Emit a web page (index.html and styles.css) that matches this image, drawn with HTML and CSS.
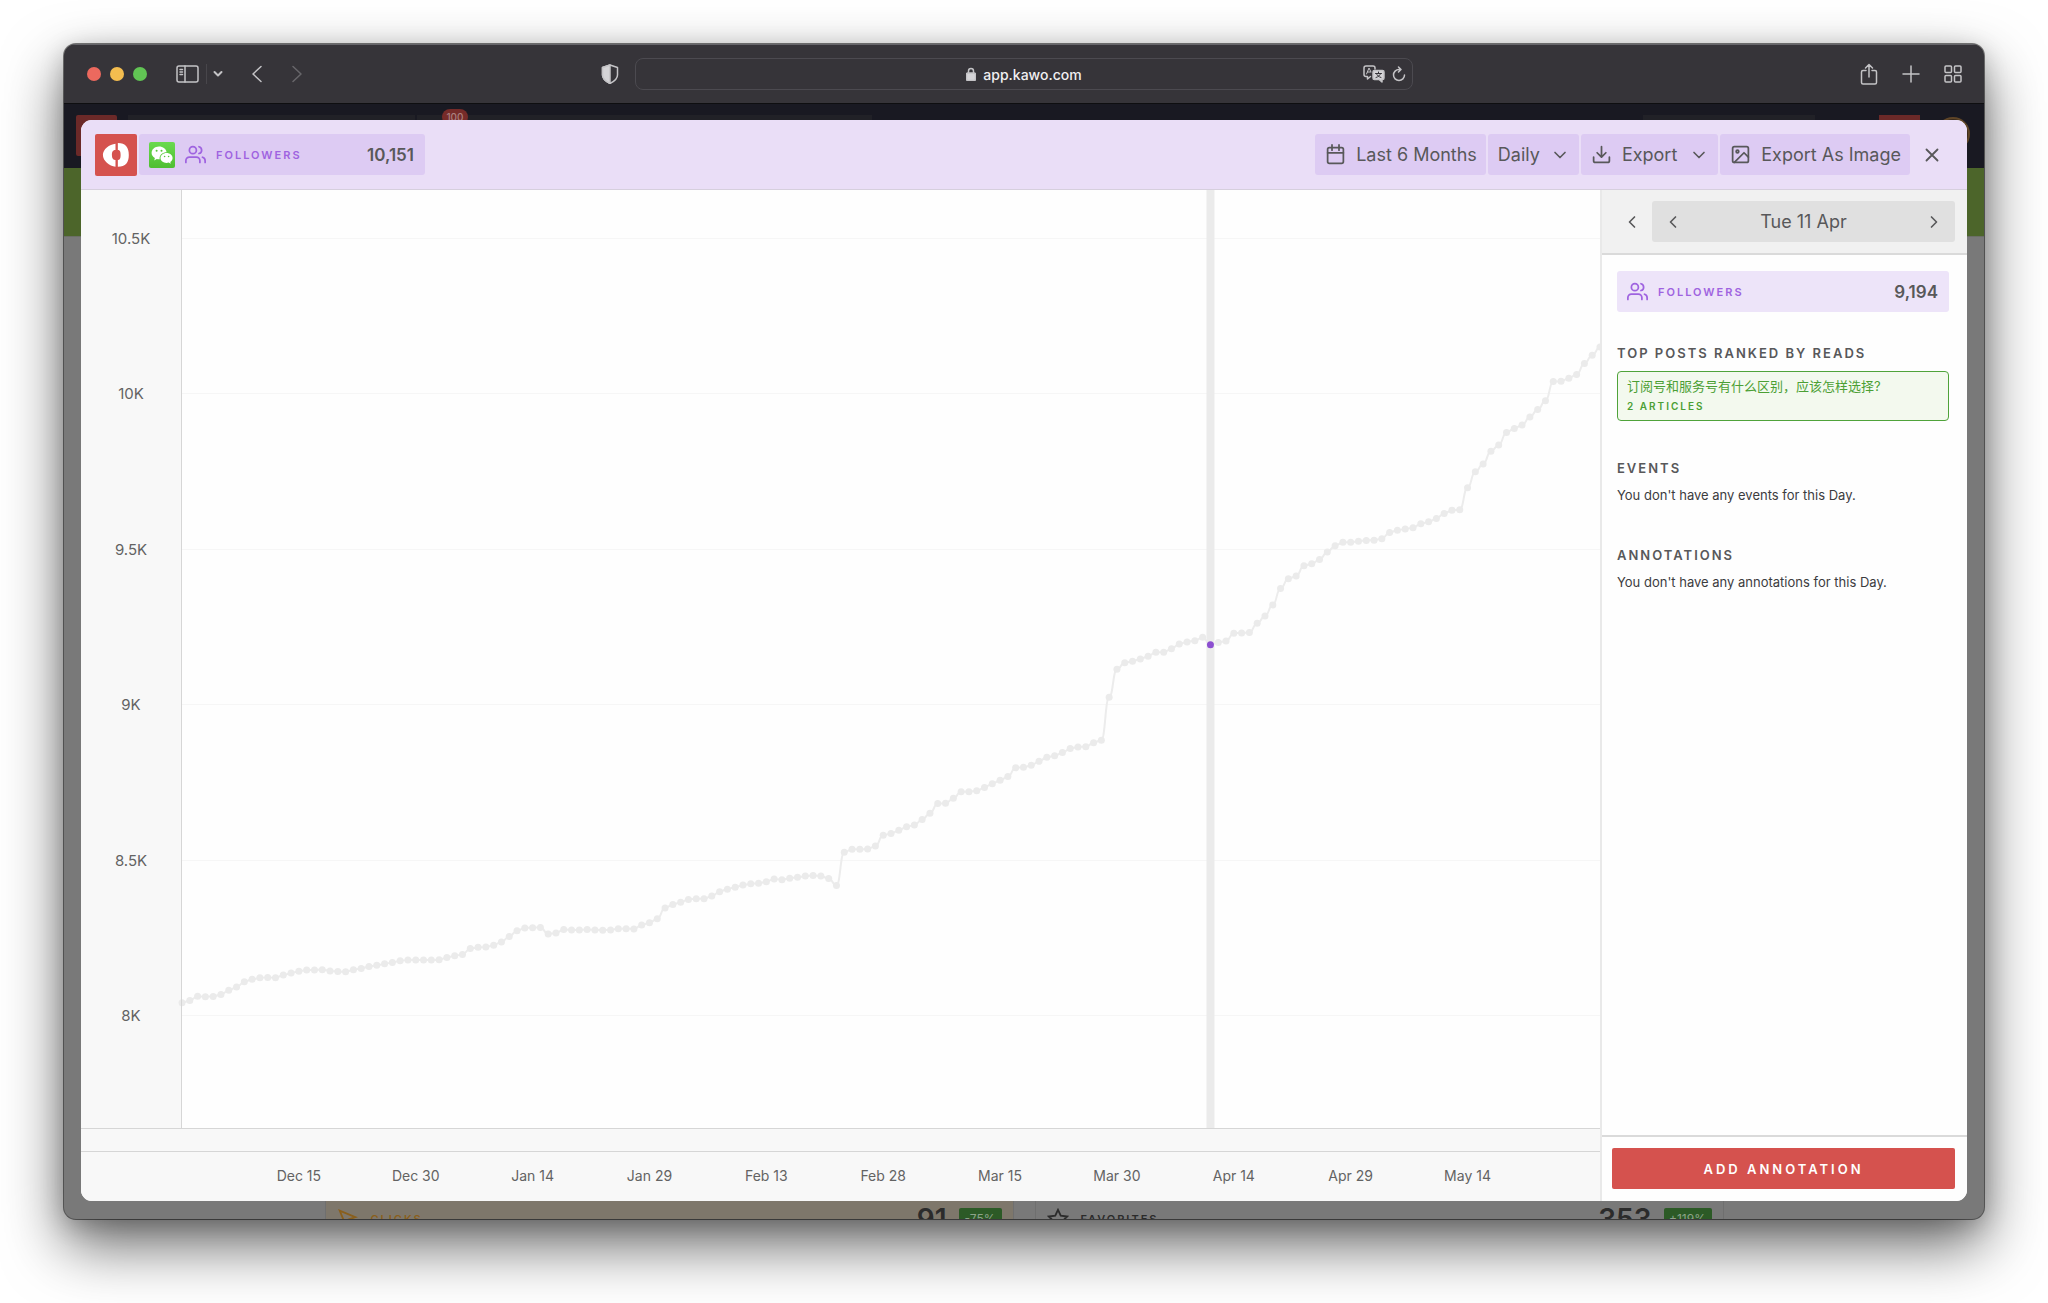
FILE: index.html
```
<!DOCTYPE html>
<html lang="en">
<head>
    <meta charset="UTF-8">
    <meta name="viewport" content="width=device-width, initial-scale=1.0">
    <title>KAWO - Followers</title>
    <link rel="stylesheet" href="styles.css">
</head>
<body>

<div class="window">
    <!-- Browser toolbar -->
    <header class="toolbar">
        <div class="toolbar-left">
            <div class="lights">
                <span class="light red"></span>
                <span class="light yellow"></span>
                <span class="light green"></span>
            </div>
            <button class="tool sidebar-btn" aria-label="Sidebar">
                <svg width="24" height="20" viewBox="0 0 24 20"><rect x="1" y="2" width="21" height="16" rx="2"/><path d="M9 2v16M4 5.500h2.500M4 8h2.500M4 10.500h2.500"/></svg>
            </button>
            <span class="tool-divider"></span>
            <button class="tool" aria-label="Tab groups">
                <svg width="10" height="8" viewBox="0 0 10 8"><path d="M1.500 2 5 5.500 8.500 2" stroke-width="2"/></svg>
            </button>
            <button class="tool back-btn" aria-label="Back">
                <svg width="12" height="18" viewBox="0 0 12 18"><path d="M10 1.500 2 9l8 7.500"/></svg>
            </button>
            <button class="tool forward-btn" aria-label="Forward" disabled>
                <svg width="12" height="18" viewBox="0 0 12 18"><path d="m2 1.500 8 7.500-8 7.500"/></svg>
            </button>
        </div>

        <div class="toolbar-center">
            <button class="tool" aria-label="Privacy report">
                <svg width="18" height="20" viewBox="0 0 18 20"><path d="M9 1 1.500 3.500V11c0 4 3.500 6.500 7.500 8.500 4-2 7.500-4.500 7.500-8.500V3.500z"/><path class="fill" d="M9 1 1.500 3.500V11c0 4 3.500 6.500 7.500 8.500z"/></svg>
            </button>
            <div class="address">
                <span class="address-url">
                    <svg width="10" height="14" viewBox="0 0 10 14"><rect class="fill" x="0.500" y="6" width="9" height="7.500" rx="1.500"/><path d="M2.500 6V4a2.500 2.500 0 0 1 5 0v2"/></svg>
                    app.kawo.com
                </span>
                <button class="tool" aria-label="Translate">
                    <svg width="22" height="18" viewBox="0 0 22 18"><path d="M7.500 11.500 4.500 14v-2.500H3a2 2 0 0 1-2-2V3a2 2 0 0 1 2-2h7a2 2 0 0 1 2 2v1"/><path class="thin" d="m3.500 9 2.500-6 2 4M4.500 7h3"/><path class="fill" d="M11.500 5.500h8a1.500 1.500 0 0 1 1.500 1.500v6a1.500 1.500 0 0 1-1.500 1.500H19V17l-3-2.500h-4.500A1.500 1.500 0 0 1 10 13V7a1.500 1.500 0 0 1 1.500-1.500z"/><path class="cut" d="M12.500 8.500h6M15.500 7v1.500M17.500 8.500c-.5 2-2 3.200-4.500 4M13.500 8.500c.5 2 2 3.200 4.500 4"/></svg>
                </button>
                <button class="tool" aria-label="Reload">
                    <svg width="14" height="16" viewBox="0 0 14 16"><path d="M12.500 9A5.500 5.500 0 1 1 7 3.500h1.500M6.500 1l2.500 2.500L6.500 6"/></svg>
                </button>
            </div>
        </div>

        <div class="toolbar-right">
            <button class="tool" aria-label="Share">
                <svg width="18" height="22" viewBox="0 0 18 22"><path d="M6 7.500H3A1.500 1.500 0 0 0 1.500 9v10.500A1.500 1.500 0 0 0 3 21h12a1.500 1.500 0 0 0 1.500-1.500V9A1.500 1.500 0 0 0 15 7.500h-3M9 14V1.500M5.500 5 9 1.500 12.500 5"/></svg>
            </button>
            <button class="tool" aria-label="New tab">
                <svg width="18" height="18" viewBox="0 0 18 18"><path d="M9 1v16M1 9h16"/></svg>
            </button>
            <button class="tool" aria-label="Tab overview">
                <svg width="18" height="18" viewBox="0 0 18 18"><rect x="1" y="1" width="6.500" height="6.500" rx="1"/><rect x="10.500" y="1" width="6.500" height="6.500" rx="1"/><rect x="1" y="10.500" width="6.500" height="6.500" rx="1"/><rect x="10.500" y="10.500" width="6.500" height="6.500" rx="1"/></svg>
            </button>
        </div>
    </header>

    <div class="viewport">
        <!-- Dimmed dashboard behind the dialog -->
        <div class="page">
            <div class="page-nav">
                <span class="page-logo"></span>
                <span class="page-tab short"></span>
                <span class="page-tab"><b class="page-badge">100</b></span>
                <span class="page-space"></span>
                <span class="page-search"></span>
                <span class="page-create"></span>
                <span class="page-avatar"></span>
            </div>
            <div class="page-banner"></div>
            <div class="page-cards">
                <div class="page-card clicks">
                    <svg width="22" height="22" viewBox="0 0 24 24"><path d="M3 3l7 17 2.500-7.500L20 10z"/></svg>
                    <span class="card-name">CLICKS</span>
                    <span class="card-value">91</span>
                    <span class="card-change">-75%</span>
                </div>
                <div class="page-card">
                    <svg width="22" height="22" viewBox="0 0 24 24"><path d="m12 2 3 6.300 7 1-5 4.900 1.200 6.800L12 17.800 5.800 21 7 14.200 2 9.300l7-1z"/></svg>
                    <span class="card-name">FAVORITES</span>
                    <span class="card-value">353</span>
                    <span class="card-change">+119%</span>
                </div>
            </div>
        </div>

        <!-- Followers dialog -->
        <main class="dialog">
            <header class="dialog-header">
                <svg class="logo" width="42" height="42" viewBox="0 0 41 41"><rect width="41" height="41" rx="2" fill="#d5524e"/><path fill="#fff" d="M20 9.500C14 10 7.700 15 7.700 20.500S14 31.500 20 32v-6.500c-2.300-.2-3.500-1.500-3.500-5s1.200-4.600 3.500-4.800zM22.300 8.700C30 8.700 33 13 33 20.500S30 32 22.300 32v-6.500c2-.2 2.700-1.500 2.700-5s-.7-4.600-2.700-4.800z"/></svg>
                <div class="metric header-metric">
                    <svg class="wechat" width="26" height="26" viewBox="0 0 26 26">
                        <defs><linearGradient id="wechatGreen" x1="0" y1="0" x2="0" y2="1"><stop offset="0" stop-color="#6ada4e"/><stop offset="1" stop-color="#4fbe32"/></linearGradient></defs>
                        <rect width="26" height="26" rx="2" fill="url(#wechatGreen)"/>
                        <path fill="#fff" d="M10 4.500c4 0 7.300 2.500 7.600 5.700-4 0-7 2.600-7 6 0 .4 0 .8.200 1.100-1 .1-2 0-3-.3l-2.600 1.400.7-2.300C3.800 14.900 2.600 13 2.600 11c0-3.600 3.300-6.500 7.400-6.500z"/>
                        <path fill="#fff" d="M17.600 11c3.400 0 6 2.300 6 5 0 1.600-.9 3-2.300 4l.5 1.800-2.100-1.200c-.7.200-1.400.3-2.100.3-3.400 0-6.100-2.200-6.100-4.900s2.700-5 6.100-5z"/>
                        <g fill="#57c63b"><circle cx="7.600" cy="8.800" r="1"/><circle cx="12.500" cy="8.800" r="1"/><circle cx="15.600" cy="14.500" r="0.800"/><circle cx="19.600" cy="14.500" r="0.800"/></g>
                    </svg>
                    <svg class="icon" width="21" height="21" viewBox="0 0 24 24"><path d="M17 21v-2a4 4 0 0 0-4-4H5a4 4 0 0 0-4 4v2M23 21v-2a4 4 0 0 0-3-3.870M16 3.130a4 4 0 0 1 0 7.750"/><circle cx="9" cy="7" r="4"/></svg>
                    <span class="metric-name">FOLLOWERS</span>
                    <span class="metric-value">10,151</span>
                </div>
                <div class="actions">
                    <button class="action">
                        <svg class="icon" width="21" height="21" viewBox="0 0 24 24"><rect x="3" y="4" width="18" height="18" rx="2"/><path d="M16 1v6M8 1v6M3 10h18"/></svg>
                        Last 6 Months
                    </button>
                    <button class="action">
                        Daily
                        <svg class="icon" width="20" height="20" viewBox="0 0 24 24"><path d="m6 9 6 6 6-6"/></svg>
                    </button>
                    <button class="action">
                        <svg class="icon" width="21" height="21" viewBox="0 0 24 24"><path d="M21 15v4a2 2 0 0 1-2 2H5a2 2 0 0 1-2-2v-4M7 10l5 5 5-5M12 15V3"/></svg>
                        Export
                        <svg class="icon export-arrow" width="20" height="20" viewBox="0 0 24 24"><path d="m6 9 6 6 6-6"/></svg>
                    </button>
                    <button class="action">
                        <svg class="icon" width="21" height="21" viewBox="0 0 24 24"><rect x="3" y="3" width="18" height="18" rx="2"/><circle cx="8.500" cy="8.500" r="1.500"/><path d="m21 15-5-5L5 21"/></svg>
                        Export As Image
                    </button>
                    <button class="close" aria-label="Close">
                        <svg class="icon" width="22" height="22" viewBox="0 0 24 24"><path d="M18 6 6 18M6 6l12 12"/></svg>
                    </button>
                </div>
            </header>

            <div class="dialog-body">
                <section class="chart">
                    <svg id="chart"></svg>
                </section>

                <aside class="panel">
                    <div class="panel-header">
                        <button class="nav-btn" aria-label="Collapse">
                            <svg class="icon" width="20" height="20" viewBox="0 0 24 24"><path d="m15 18-6-6 6-6"/></svg>
                        </button>
                        <div class="date-picker">
                            <button class="nav-btn" aria-label="Previous day">
                                <svg class="icon" width="20" height="20" viewBox="0 0 24 24"><path d="m15 18-6-6 6-6"/></svg>
                            </button>
                            <span>Tue 11 Apr</span>
                            <button class="nav-btn" aria-label="Next day">
                                <svg class="icon" width="20" height="20" viewBox="0 0 24 24"><path d="m9 18 6-6-6-6"/></svg>
                            </button>
                        </div>
                    </div>
                    <div class="panel-content">
                        <div class="metric">
                            <svg class="icon" width="21" height="21" viewBox="0 0 24 24"><path d="M17 21v-2a4 4 0 0 0-4-4H5a4 4 0 0 0-4 4v2M23 21v-2a4 4 0 0 0-3-3.870M16 3.130a4 4 0 0 1 0 7.750"/><circle cx="9" cy="7" r="4"/></svg>
                            <span class="metric-name">FOLLOWERS</span>
                            <span class="metric-value">9,194</span>
                        </div>
                        <section class="block">
                            <h2>TOP POSTS RANKED BY READS</h2>
                            <a class="post" href="#">
                                <span class="post-title" lang="zh">订阅号和服务号有什么区别，应该怎样选择?</span>
                                <span class="post-meta">2 ARTICLES</span>
                            </a>
                        </section>
                        <section class="block">
                            <h2>EVENTS</h2>
                            <p>You don't have any events for this Day.</p>
                        </section>
                        <section class="block">
                            <h2>ANNOTATIONS</h2>
                            <p>You don't have any annotations for this Day.</p>
                        </section>
                    </div>
                    <div class="panel-footer">
                        <button class="add-btn">ADD ANNOTATION</button>
                    </div>
                </aside>
            </div>
        </main>
    </div>
</div>

<script src="chart.js"></script>
</body>
</html>
```
FILE: styles.css
```
* {
    box-sizing: border-box;
}
body {
    margin: 0;
    min-height: 100vh;
    padding: 44px 64px 84px;
    display: flex;
    background-color: #fff;
    color: #58585a;
    font-family: Inter, "Noto Sans CJK SC", sans-serif;
}
button {
    border: none;
    background: none;
    padding: 0;
    color: inherit;
    font-family: inherit;
    cursor: pointer;
}
svg {
    display: block;
    flex: none;
}
.window {
    flex: 1;
    display: flex;
    flex-direction: column;
    border-radius: 12px;
    overflow: hidden;
    background-color: #797979;
    box-shadow: 0 0 0 1px rgba(0, 0, 0, 0.5), 0 26px 60px rgba(0, 0, 0, 0.6), 0 6px 24px rgba(0, 0, 0, 0.2);
}

/* Browser toolbar */
.toolbar {
    height: 60px;
    display: grid;
    grid-template-columns: 1fr 846px 1fr;
    align-items: center;
    background-color: #363439;
    border-top: 1px solid #66656a;
    border-bottom: 1px solid #0e0e10;
}
.toolbar-left,
.toolbar-center,
.toolbar-right,
.lights {
    display: flex;
    align-items: center;
}
.toolbar-left {
    padding-left: 23px;
}
.toolbar-right {
    justify-content: flex-end;
    gap: 24px;
    padding-right: 22px;
}
.lights {
    gap: 9px;
    margin-right: 29px;
}
.light {
    width: 14px;
    height: 14px;
    border-radius: 50%;
}
.red {
    background-color: #ec695e;
}
.yellow {
    background-color: #f4bd4f;
}
.green {
    background-color: #61c454;
}
.tool svg,
.address-url svg {
    fill: none;
    stroke: #c4c3c6;
    stroke-width: 1.5;
    stroke-linecap: round;
    stroke-linejoin: round;
}
.tool .fill,
.address-url .fill {
    fill: #d5d4d7;
}
.tool .thin {
    stroke-width: 1;
}
.tool .cut {
    stroke: #363439;
    stroke-width: 1;
}
.tool-divider {
    width: 1px;
    height: 20px;
    margin: 0 6px 0 6px;
    background-color: #48464b;
}
.back-btn,
.forward-btn {
    margin-left: 28px;
}
.forward-btn {
    opacity: 0.35;
}
.toolbar-center {
    gap: 16px;
    padding-right: 34px;
}
.address {
    flex: 1;
    height: 32px;
    display: flex;
    align-items: center;
    gap: 7px;
    padding: 0 6px;
    border: 1px solid #4c4a50;
    border-radius: 8px;
}
.address-url {
    flex: 1;
    display: flex;
    align-items: center;
    justify-content: center;
    gap: 7px;
    padding-left: 50px;
    color: #f0eff1;
    font-size: 14px;
    font-weight: 500;
}

/* Dashboard under the overlay */
.viewport {
    flex: 1;
    position: relative;
    display: flex;
}
.page {
    flex: 1;
    display: flex;
    flex-direction: column;
    overflow: hidden;
    border-radius: 0 0 12px 12px;
}
.page-nav {
    height: 64px;
    display: flex;
    align-items: flex-start;
    padding: 11px 14px 0 12px;
    background-color: #191922;
}
.page-logo {
    width: 41px;
    height: 41px;
    margin-right: 11px;
    border-radius: 2px;
    background-color: #6b2928;
}
.page-tab {
    width: 455px;
    height: 41px;
    background-color: #212127;
}
.page-tab.short {
    width: 287px;
    margin-right: 2px;
}
.page-badge {
    display: block;
    width: 26px;
    margin: -6px 0 0 25px;
    border-radius: 8px;
    background-color: #762b29;
    color: #a8807f;
    font-size: 10px;
    line-height: 16px;
    font-weight: 500;
    text-align: center;
}
.page-space {
    flex: 1;
}
.page-search {
    width: 172px;
    height: 41px;
    margin-right: 64px;
    background-color: #212127;
}
.page-create {
    width: 41px;
    height: 41px;
    margin-right: 16px;
    background-color: #6b2928;
}
.page-avatar {
    width: 34px;
    height: 34px;
    margin-top: 2px;
    border: 2px solid #5f4527;
    border-radius: 50%;
    background-color: #3a2a1c;
}
.page-banner {
    height: 69px;
    background-color: #4c652a;
    border-bottom: 1px solid #6b6f66;
}
.page-cards {
    display: grid;
    grid-template-columns: 689px 689px;
    justify-content: center;
    gap: 21px;
    margin-top: auto;
    margin-bottom: -20px;
}
.page-card {
    height: 41px;
    display: flex;
    align-items: center;
    gap: 12px;
    padding: 0 11px;
    border: 1px solid #6f6f6f;
    background-color: #797979;
    color: #2b2b2b;
}
.page-card svg {
    fill: none;
    stroke: currentColor;
    stroke-width: 2;
}
.clicks {
    background-color: #7e776b;
    color: #8a5f1c;
}
.card-name {
    flex: 1;
    font-size: 11px;
    font-weight: 600;
    letter-spacing: 2px;
}
.card-value {
    color: #2b2b2b;
    font-size: 28px;
    font-weight: 600;
}
.card-change {
    width: 48px;
    border-radius: 2px;
    background-color: #2c5a26;
    color: #8da38a;
    font-size: 12px;
    line-height: 22px;
    text-align: center;
}
.clicks .card-change {
    width: 43px;
}

/* Dialog */
.dialog {
    position: absolute;
    inset: 16px 17px 18px 17px;
    display: flex;
    flex-direction: column;
    border-radius: 11px;
    overflow: hidden;
    background-color: #fff;
}
.dialog-header {
    height: 70px;
    display: flex;
    align-items: center;
    gap: 2px;
    padding: 0 13px 0 14px;
    background-color: #eadef7;
    border-bottom: 1px solid #d6cfdd;
}
.icon {
    fill: none;
    stroke: currentColor;
    stroke-width: 2;
    stroke-linecap: round;
    stroke-linejoin: round;
}
.metric {
    height: 41px;
    display: flex;
    align-items: center;
    gap: 10px;
    padding: 0 11px 0 10px;
    border-radius: 3px;
    background-color: #ede4f9;
}
.metric .icon {
    color: #9f63e0;
}
.header-metric {
    width: 286px;
    background-color: #ddcbf3;
}
.metric-name {
    flex: 1;
    color: #9f63e0;
    font-size: 11px;
    font-weight: 600;
    letter-spacing: 2px;
}
.metric-value {
    font-size: 17px;
    font-weight: 600;
}
.actions {
    flex: 1;
    display: flex;
    justify-content: flex-end;
    gap: 2px;
}
.action {
    height: 41px;
    display: flex;
    align-items: center;
    gap: 10px;
    padding: 0 9px 0 10px;
    border-radius: 3px;
    background-color: #ddcbf3;
    font-size: 18px;
}
.export-arrow {
    margin-left: 2px;
}
.close {
    margin: 0 11px 0 9px;
}
.dialog-body {
    flex: 1;
    min-height: 0;
    display: flex;
}
.chart {
    flex: 1;
    min-width: 0;
    background-color: #f8f8f8;
}
.chart svg {
    width: 100%;
    height: 100%;
}
.plot-bg {
    fill: #fefefe;
}
.axis-line {
    stroke: #d6d6d6;
}
.grid-line {
    stroke: #f6f6f6;
}
.y-label {
    fill: #636363;
    font-size: 15px;
    text-anchor: middle;
}
.x-label {
    fill: #636363;
    font-size: 14px;
    text-anchor: middle;
}
.series {
    fill: none;
    stroke: #ececec;
    stroke-width: 2;
}
.point {
    fill: #ebebeb;
}
.cursor {
    fill: #ebebeb;
}
.point.selected {
    fill: #8c4fd0;
}

/* Side panel */
.panel {
    width: 367px;
    display: flex;
    flex-direction: column;
    border-left: 2px solid #e9e9e9;
    background-color: #fefefe;
}
.panel-header {
    height: 65px;
    display: flex;
    align-items: center;
    gap: 10px;
    padding: 0 12px 0 20px;
    background-color: #f1f1f1;
    border-bottom: 2px solid #dadada;
}
.date-picker {
    flex: 1;
    height: 41px;
    display: flex;
    align-items: center;
    justify-content: space-between;
    padding: 0 11px;
    border-radius: 3px;
    background-color: #e0e0e0;
    font-size: 18px;
}
.panel-content {
    flex: 1;
    padding: 16px 18px 0 15px;
}
.block {
    margin-top: 32px;
}
h2 {
    margin: 0 0 9px;
    font-size: 13px;
    line-height: 18px;
    font-weight: 600;
    letter-spacing: 2px;
}
.post {
    height: 50px;
    display: flex;
    flex-direction: column;
    margin-bottom: 38px;
    padding: 5px 9px;
    border: 1px solid #4fa33a;
    border-radius: 4px;
    background-color: #f3f9ee;
    color: #4b9f34;
    text-decoration: none;
}
.post-title {
    font-size: 13px;
    line-height: 18px;
}
.post-meta {
    font-size: 10px;
    line-height: 22px;
    font-weight: 600;
    letter-spacing: 2px;
}
.block p {
    margin: 0 0 42px;
    color: #3c3c3e;
    font-size: 13px;
    line-height: 18px;
}
.panel-footer {
    padding: 11px 12px 12px 10px;
    border-top: 2px solid #dadada;
}
.add-btn {
    width: 100%;
    height: 41px;
    border-radius: 2px;
    background-color: #d5524e;
    color: #fff;
    font-size: 13px;
    font-weight: 600;
    letter-spacing: 3px;
}
```
FILE: chart.js
```
// Daily follower counts over 8000, 30 Nov - 31 May
const followers = [
    43, 50, 64, 62, 63, 69, 83, 93, 110, 118, 123, 124, 123, 132, 138,
    144, 148, 148, 149, 145, 143, 142, 149, 153, 159, 163, 168, 172, 178, 180,
    180, 180, 180, 181, 188, 194, 198, 217, 221, 222, 228, 238, 256, 274, 283,
    284, 285, 264, 267, 278, 277, 277, 278, 277, 276, 277, 281, 281, 280, 293,
    300, 313, 347, 359, 366, 375, 377, 377, 386, 400, 408, 414, 421, 425, 427,
    432, 441, 438, 443, 446, 450, 452, 450, 442, 420, 527, 536, 536, 537, 547,
    581, 587, 597, 609, 614, 632, 652, 683, 684, 700, 721, 721, 724, 735, 747,
    758, 770, 798, 800, 806, 819, 832, 837, 847, 860, 865, 866, 879, 887, 1025,
    1115, 1136, 1141, 1148, 1157, 1170, 1170, 1181, 1196, 1203, 1207, 1218, 1194, 1201, 1206,
    1231, 1232, 1233, 1263, 1286, 1322, 1375, 1406, 1415, 1448, 1454, 1468, 1492, 1512, 1523,
    1523, 1527, 1529, 1530, 1535, 1555, 1562, 1566, 1570, 1583, 1589, 1600, 1616, 1626, 1628,
    1699, 1750, 1775, 1816, 1836, 1876, 1889, 1900, 1926, 1950, 1978, 2040, 2041, 2051, 2063,
    2098, 2125, 2151
].map(n => n + 8000);

const xLabels = ['Dec 15', 'Dec 30', 'Jan 14', 'Jan 29', 'Feb 13', 'Feb 28', 'Mar 15', 'Mar 30', 'Apr 14', 'Apr 29', 'May 14'];
const yLabels = { 8000: '8K', 8500: '8.5K', 9000: '9K', 9500: '9.5K', 10000: '10K', 10500: '10.5K' };
const selected = 132;
const minY = 7640;
const maxY = 10656;
const axisWidth = 101;
const axisHeight = 73;
const stripHeight = 23;

function draw() {
    const svg = document.getElementById('chart');
    const width = svg.parentElement.clientWidth;
    const height = svg.parentElement.clientHeight;
    const bottom = height - axisHeight;
    const x = i => axisWidth + i * (width - axisWidth) / (followers.length - 1);
    const y = v => (maxY - v) / (maxY - minY) * bottom;

    let html = `<rect class="plot-bg" x="${axisWidth}" y="0" width="${width - axisWidth}" height="${bottom}"/>`;

    for (const value in yLabels) {
        const pos = Math.round(y(value));
        html += `<line class="grid-line" x1="${axisWidth}" x2="${width}" y1="${pos - 0.5}" y2="${pos - 0.5}"/>`;
        html += `<text class="y-label" x="50" y="${pos + 5}">${yLabels[value]}</text>`;
    }

    html += `<rect class="cursor" x="${x(selected) - 4}" y="0" width="8" height="${bottom}"/>`;

    // smooth line, flat at every point
    let path = `M${x(0)} ${y(followers[0])}`;
    for (let i = 1; i < followers.length; i++) {
        const mid = (x(i - 1) + x(i)) / 2;
        path += `C${mid} ${y(followers[i - 1])} ${mid} ${y(followers[i])} ${x(i)} ${y(followers[i])}`;
    }
    html += `<path class="series" d="${path}"/>`;

    followers.forEach((value, i) => {
        html += `<circle class="point${i === selected ? ' selected' : ''}" cx="${x(i)}" cy="${y(value)}" r="3.5"/>`;
    });

    html += `<line class="axis-line" x1="${axisWidth - 0.5}" x2="${axisWidth - 0.5}" y1="0" y2="${bottom}"/>`;
    html += `<line class="axis-line" x1="0" x2="${width}" y1="${bottom + 0.5}" y2="${bottom + 0.5}"/>`;
    html += `<line class="axis-line" x1="0" x2="${width}" y1="${bottom + stripHeight + 0.5}" y2="${bottom + stripHeight + 0.5}"/>`;

    xLabels.forEach((label, i) => {
        html += `<text class="x-label" x="${x((i + 1) * 15)}" y="${height - 20}">${label}</text>`;
    });

    svg.innerHTML = html;
}

draw();
window.addEventListener('resize', draw);
```
